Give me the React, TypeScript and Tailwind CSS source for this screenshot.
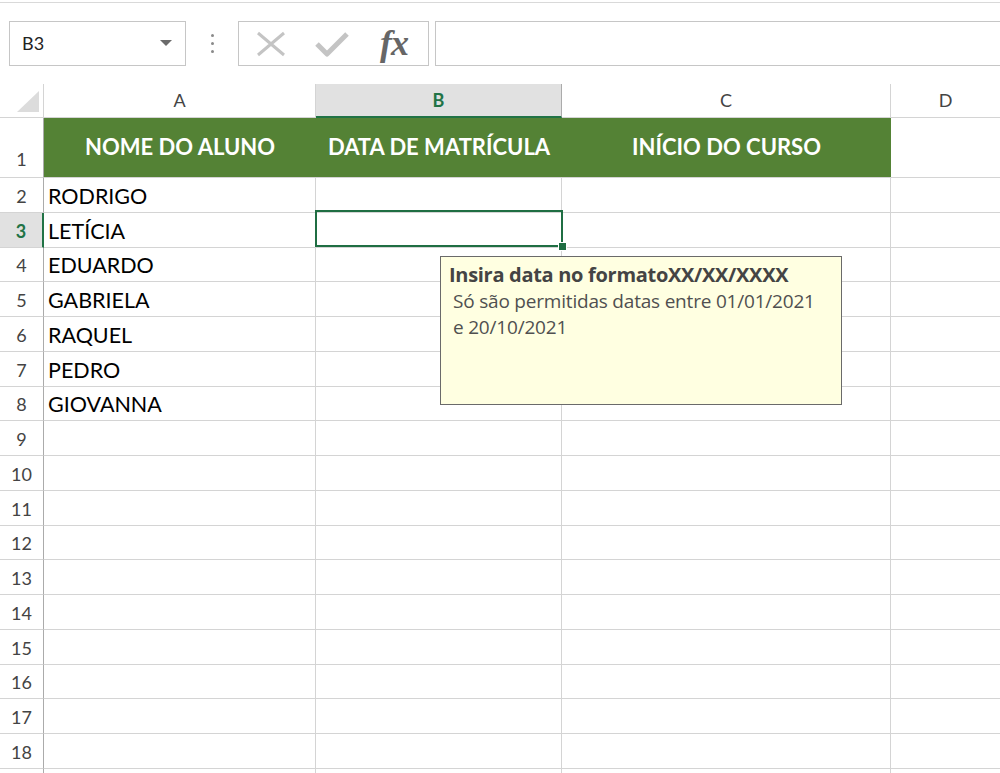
import React from "react";

const ROW_H = "h-[34.76px]";

const names = ["RODRIGO", "LETÍCIA", "EDUARDO", "GABRIELA", "RAQUEL", "PEDRO", "GIOVANNA"];

function Row({ n, name, selected }: { n?: number; name?: string; selected?: boolean }) {
  return (
    <div className={`flex ${ROW_H}`}>
      <div
        className={`w-[44px] shrink-0 flex items-end justify-center pb-[2px] text-[18px] border-b border-[#d4d4d4] ${
          selected
            ? "bg-[#e1e1e1] text-[#217346] font-bold border-r-2 border-r-[#217346]"
            : "text-[#444] border-r border-r-[#ababab]"
        }`}
      >
        {n}
      </div>
      <div className="w-[272px] shrink-0 border-r border-b border-[#d4d4d4] flex items-end pl-[4px] pb-[1px] text-[21.5px] leading-[30px] text-black">
        {name}
      </div>
      <div className="w-[246px] shrink-0 border-r border-b border-[#d4d4d4]" />
      <div className="w-[329px] shrink-0 border-r border-b border-[#d4d4d4]" />
      <div className="flex-1 border-b border-[#d4d4d4]" />
    </div>
  );
}

export default function App() {
  const rows = [];
  for (let i = 2; i <= 18; i++) {
    rows.push(<Row key={i} n={i} name={names[i - 2]} selected={i === 3} />);
  }
  rows.push(<Row key={19} />);
  return (
    <div
      className="relative w-[1000px] h-[773px] overflow-hidden bg-white"
      style={{ fontFamily: "Lato, 'Noto Sans', sans-serif" }}
    >
      {/* top line */}
      <div className="h-[2px]" />
      <div className="border-t border-[#d9d9d9]" />
      {/* formula bar */}
      <div className="flex items-stretch mt-[18px] h-[45px]">
        <div className="ml-[9px] w-[177px] border border-[#c6c6c6] flex items-center justify-between pl-[12px] pr-[13px] text-[18px] text-[#222]">
          <span>B3</span>
          <svg width="12" height="7" viewBox="0 0 12 7">
            <path d="M0 0 L12 0 L6 6 Z" fill="#6b6b6b" />
          </svg>
        </div>
        <div className="w-[52px] flex flex-col items-center justify-center gap-[5px]">
          <div className="w-[3px] h-[3px] rounded-full bg-[#8a8a8a]" />
          <div className="w-[3px] h-[3px] rounded-full bg-[#8a8a8a]" />
          <div className="w-[3px] h-[3px] rounded-full bg-[#8a8a8a]" />
        </div>
        <div className="w-[191px] border border-[#c6c6c6] flex items-center">
          <svg className="ml-[16px]" width="32" height="28" viewBox="0 0 32 28">
            <path d="M3 3 L29 25 M29 3 L3 25" stroke="#c4c4c4" strokeWidth="3" fill="none" />
          </svg>
          <svg className="ml-[28px]" width="34" height="28" viewBox="0 0 34 28">
            <path d="M2 14 L12 24 L32 4" stroke="#c4c4c4" strokeWidth="5" fill="none" strokeLinejoin="round" />
          </svg>
          <span
            className="ml-[31px] text-[36px] italic text-[#666] leading-none -mt-[2px] tracking-[-1px]"
            style={{ fontFamily: "'Liberation Serif', 'DejaVu Serif', serif", fontWeight: 600 }}
          >
            fx
          </span>
        </div>
        <div className="ml-[6px] flex-1 border-t border-b border-l border-[#c6c6c6]" />
      </div>
      {/* column header */}
      <div className="flex h-[34px] mt-[18px]">
        <div className="w-[44px] shrink-0 relative border-r border-b border-[#d4d4d4]">
          <svg className="absolute right-[4px] bottom-[5px]" width="22" height="21" viewBox="0 0 22 21">
            <path d="M22 0 L22 21 L0 21 Z" fill="#dcdcdc" />
          </svg>
        </div>
        <div className="w-[272px] shrink-0 border-r border-b border-[#d4d4d4] flex items-center justify-center text-[18px] text-[#444]">
          A
        </div>
        <div className="w-[246px] shrink-0 bg-[#e1e1e1] border-r border-r-[#ababab] border-b-2 border-b-[#217346] flex items-center justify-center text-[18px] font-bold text-[#217346]">
          B
        </div>
        <div className="w-[329px] shrink-0 border-r border-b border-[#d4d4d4] flex items-center justify-center text-[18px] text-[#444]">
          C
        </div>
        <div className="flex-1 border-b border-[#d4d4d4] flex items-center justify-center text-[18px] text-[#444]">
          D
        </div>
      </div>
      {/* row 1 */}
      <div className="flex h-[60px]">
        <div className="w-[44px] shrink-0 flex items-end justify-center pb-[4px] text-[18px] text-[#444] border-r border-r-[#ababab] border-b border-[#d4d4d4]">
          1
        </div>
        <div className="w-[847px] shrink-0 bg-[#548235] border-b border-[#d4d4d4] flex text-white font-bold text-[22px]">
          <div className="w-[272px] flex items-center justify-center pb-[2px]">NOME DO ALUNO</div>
          <div className="w-[246px] flex items-center justify-center pb-[2px] whitespace-nowrap">DATA DE MATRÍCULA</div>
          <div className="w-[329px] flex items-center justify-center pb-[2px]">INÍCIO DO CURSO</div>
        </div>
        <div className="flex-1 border-b border-[#d4d4d4]" />
      </div>
      {rows}

      {/* selected cell */}
      <div className="absolute left-[315px] top-[210px] w-[248px] h-[37px] border-2 border-[#1f6e43]" />
      <div className="absolute left-[558px] top-[242px] w-[9px] h-[9px] bg-[#1f6e43] border border-white" />

      {/* input message tooltip */}
      <div
        className="absolute left-[440px] top-[256px] w-[402px] h-[149px] bg-[#ffffe1] border border-[#6a6a6a] pl-[8px] pt-[5px] text-[#444]"
        style={{ fontFamily: "'Open Sans', 'Noto Sans', sans-serif" }}
      >
        <div className="font-bold text-[20px] leading-[26px] tracking-[-0.3px]">Insira data no formatoXX/XX/XXXX</div>
        <div className="text-[19px] leading-[26px] pl-[4px] text-[#505050] tracking-[-0.2px]">Só são permitidas datas entre 01/01/2021</div>
        <div className="text-[19px] leading-[26px] pl-[4px] text-[#505050] tracking-[-0.2px]">e 20/10/2021</div>
      </div>
    </div>
  );
}
